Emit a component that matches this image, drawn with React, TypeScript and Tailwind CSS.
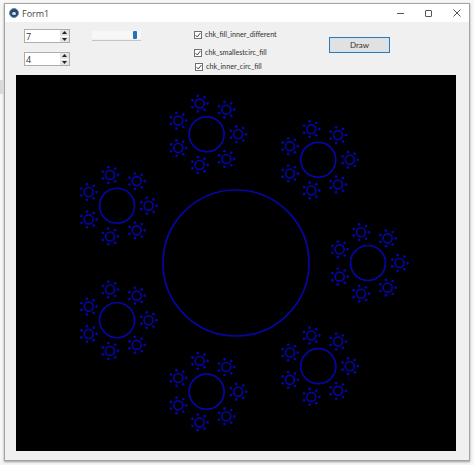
const BLUE = '#0606a6';

// positions of n items round a centre, starting at angle 0
function ring(cx: number, cy: number, r: number, n = 7) {
  return Array.from({ length: n }, (_, i) => {
    const a = (i * 2 * Math.PI) / n;
    return { x: cx + r * Math.cos(a), y: cy + r * Math.sin(a) };
  });
}

function Fractal() {
  // the canvas starts at 16,75 in the screenshot
  const cx = 220;
  const cy = 188;
  return (
    <svg width="440" height="376" viewBox="0 0 440 376" className="block">
      <circle cx={cx} cy={cy} r={73} fill="none" stroke={BLUE} strokeWidth={1.7} />
      {ring(cx, cy, 132).map((m, i) => (
        <g key={i}>
          <circle cx={m.x} cy={m.y} r={17.5} fill="none" stroke={BLUE} strokeWidth={1.7} />
          {ring(m.x, m.y, 31.5).map((s, j) => (
            <g key={j}>
              <circle cx={s.x} cy={s.y} r={4.5} fill="none" stroke={BLUE} strokeWidth={1.6} />
              {ring(s.x, s.y, 8).map((d, k) => (
                <circle key={k} cx={d.x} cy={d.y} r={1.4} fill={BLUE} />
              ))}
            </g>
          ))}
        </g>
      ))}
    </svg>
  );
}

function Spin({ value }: { value: string }) {
  return (
    <div className="w-[46px] h-[14px] bg-white border border-[#adadad] flex items-center justify-between">
      <span className="pl-[1px] text-[9px] leading-none text-[#333]">{value}</span>
      <div className="w-[9px] h-full flex flex-col gap-[1px] bg-white">
        <div className="flex-1 bg-[#e4e4e4] flex items-center justify-center">
          <svg width="5" height="3" viewBox="0 0 5 3"><path d="M2.5 0 5 3H0z" fill="#222" /></svg>
        </div>
        <div className="flex-1 bg-[#e4e4e4] flex items-center justify-center">
          <svg width="5" height="3" viewBox="0 0 5 3"><path d="M0 0h5L2.5 3z" fill="#222" /></svg>
        </div>
      </div>
    </div>
  );
}

function Check({ label, className }: { label: string; className: string }) {
  return (
    <div className={`flex items-center gap-[3px] h-[10px] ${className}`}>
      <div className="w-[8px] h-[8px] bg-white border border-[#707070] flex items-center justify-center">
        <svg width="6" height="6" viewBox="0 0 6 6"><path d="M.6 3.2 2.3 5 5.4 1" fill="none" stroke="#333" strokeWidth="0.9" /></svg>
      </div>
      <span className="font-['Lato',sans-serif] text-[7.2px] leading-none text-[#333] whitespace-nowrap">{label}</span>
    </div>
  );
}

export default function App() {
  return (
    <div className="relative w-[474px] h-[465px] bg-[#f6f6f6] pt-[3px] pl-[4px] pr-[4px] pb-[3px] overflow-hidden font-['Open_Sans',sans-serif]">
      <div className="absolute left-0 top-[80px] w-[3px] h-[14px] bg-[#d9d9d9]" />
      <div className="w-[466px] h-[458px] border border-[#a3a3a3] shadow-[0_1px_2px_#999] flex flex-col bg-[#f0f0f0]">
        {/* Title bar */}
        <div className="h-[18px] bg-white flex items-center shrink-0">
          <div className="ml-[4px] w-[10px] h-[10px] rounded-full bg-[#27496e] border border-[#6c8cb0] flex items-center justify-center">
            <div className="w-[4px] h-[3px] rounded-full bg-[#cfd8e2]" />
          </div>
          <span className="ml-[3px] text-[9px] leading-none text-[#444]">Form1</span>
          <div className="ml-auto flex items-center gap-[21px] mr-[8px]">
            <div className="w-[7px] h-[1px] bg-[#555]" />
            <div className="w-[7px] h-[7px] rounded-[1px] border border-[#555]" />
            <svg width="8" height="8" viewBox="0 0 8 8"><path d="M.5.5l7 7M7.5.5l-7 7" stroke="#555" strokeWidth="1" /></svg>
          </div>
        </div>

        {/* Controls */}
        <div className="h-[53px] flex shrink-0">
          <div className="ml-[19px] mt-[7px] flex flex-col gap-[9px]">
            <Spin value="7" />
            <Spin value="4" />
          </div>
          <div className="ml-[22px] mt-[9px] w-[49px]">
            <div className="h-[8px] bg-[#f7f7f7] flex justify-end pr-[4px]">
              <div className="w-[4px] h-[8px] rounded-[1px] bg-[#2670c4]" />
            </div>
            <div className="h-[1px] mt-[1px] bg-[#c4c4c4]" />
          </div>
          <div className="ml-[53px] w-[135px] flex flex-col">
            <Check label="chk_fill_inner_different" className="mt-[8px]" />
            <Check label="chk_smallestcirc_fill" className="mt-[8px]" />
            <Check label="chk_inner_circ_fill" className="mt-[4px] ml-[1px]" />
          </div>
          <button className="mt-[15px] w-[61px] h-[16px] border border-[#2b79b5] bg-[#e1e1e1] outline outline-1 outline-[#cfe3f3] -outline-offset-2 font-['Lato',sans-serif] text-[8px] leading-none text-[#333]">
            Draw
          </button>
        </div>

        {/* Canvas */}
        <div className="ml-[11px] w-[440px] h-[376px] bg-black">
          <Fractal />
        </div>
      </div>
    </div>
  );
}
